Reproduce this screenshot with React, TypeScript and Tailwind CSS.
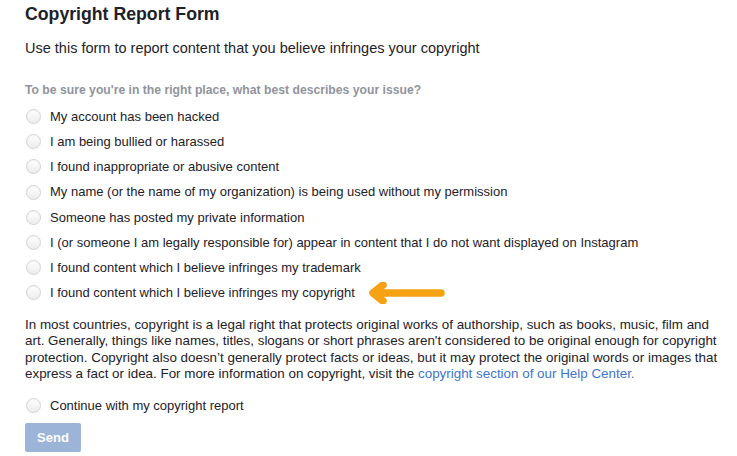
const options = [
  "My account has been hacked",
  "I am being bullied or harassed",
  "I found inappropriate or abusive content",
  "My name (or the name of my organization) is being used without my permission",
  "Someone has posted my private information",
  "I (or someone I am legally responsible for) appear in content that I do not want displayed on Instagram",
  "I found content which I believe infringes my trademark",
  "I found content which I believe infringes my copyright",
];

function Radio() {
  return (
    <span className="inline-block w-[15px] h-[15px] shrink-0 rounded-full border border-[#d3d3d3] bg-gradient-to-b from-white to-[#ececec] shadow-[inset_0_1px_1px_rgba(0,0,0,0.04)]" />
  );
}

function Arrow() {
  return (
    <svg width="80" height="22" viewBox="0 0 80 22" className="ml-[3px]">
      <path
        d="M74 11 H8 M16 3 L6 11 L16 19"
        fill="none"
        stroke="#f5a315"
        strokeWidth="7.5"
        strokeLinecap="round"
        strokeLinejoin="round"
      />
    </svg>
  );
}

export default function App() {
  return (
    <div className="w-[737px] h-[456px] bg-white overflow-hidden pl-[25px] pt-[3px] font-['Liberation_Sans',Arial,sans-serif] text-[#1d2129]">
      <h1 className="text-[17.7px] font-bold leading-[22px]">Copyright Report Form</h1>
      <p className="mt-[13px] text-[14.5px] leading-[20px]">
        Use this form to report content that you believe infringes your copyright
      </p>
      <p className="mt-[24px] text-[12.2px] font-bold text-[#90949c] leading-[16px]">
        To be sure you're in the right place, what best describes your issue?
      </p>
      <div className="mt-[6px] flex flex-col">
        {options.map((o, i) => (
          <label key={o} className="flex items-center h-[25.2px] gap-[9px] pl-[1px] text-[13px]">
            <Radio />
            <span>{o}</span>
            {i === options.length - 1 && <Arrow />}
          </label>
        ))}
      </div>
      <p className="mt-[11px] w-[700px] text-[13.4px] leading-[16.6px] text-[#1d2129]">
        In most countries, copyright is a legal right that protects original works of authorship, such as books, music,
        film and art. Generally, things like names, titles, slogans or short phrases aren't considered to be original
        enough for copyright protection. Copyright also doesn’t generally protect facts or ideas, but it may protect the
        original words or images that express a fact or idea. For more information on copyright, visit the{" "}
        <a className="text-[#4174d0]">copyright section of our Help Center.</a>
      </p>
      <label className="mt-[13px] flex items-center gap-[9px] pl-[1px] text-[13px] h-[20px]">
        <Radio />
        <span>Continue with my copyright report</span>
      </label>
      <button className="mt-[7px] w-[56px] h-[29px] rounded-[2px] bg-[#9cb4d8] text-white text-[13px] font-bold">
        Send
      </button>
    </div>
  );
}
